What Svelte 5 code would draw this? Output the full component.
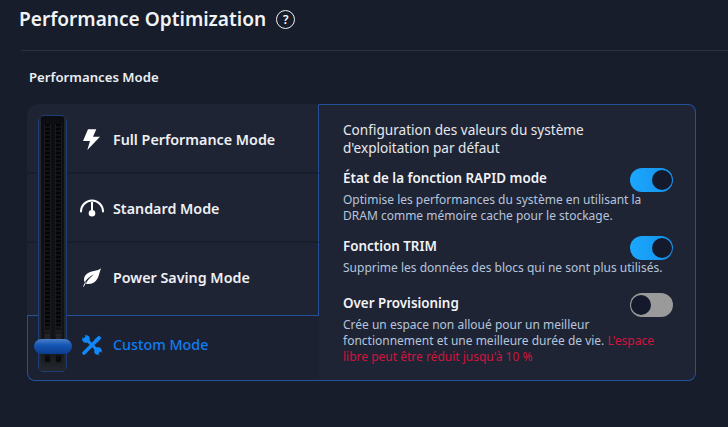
<script>
  const modes = [
    { name: 'Full Performance Mode', icon: 'bolt' },
    { name: 'Standard Mode', icon: 'gauge' },
    { name: 'Power Saving Mode', icon: 'leaf' },
    { name: 'Custom Mode', icon: 'tools', active: true }
  ];
</script>

<div class="page">
  <header class="head">
    <h1>Performance Optimization</h1>
    <span class="help">?</span>
  </header>
  <div class="rule"></div>
  <h2>Performances Mode</h2>

  <section class="panel">
    <div class="modes">
      {#each modes as mode}
        <div class="mode" class:active={mode.active}>
          <span class="icon">
            {#if mode.icon === 'bolt'}
              <svg viewBox="0 0 18 22" width="18" height="22"><path d="M5 .3h8.300L10 7.700h7L4.300 21 7 12H0z" fill="#fff" /></svg>
            {:else if mode.icon === 'gauge'}
              <svg viewBox="0 0 26 19" width="26" height="19">
                <path d="M2 12.500A11 11 0 0 1 24 12.500" fill="none" stroke="#fff" stroke-width="2" stroke-linecap="round" />
                <path d="M13 3v10" stroke="#fff" stroke-width="2" />
                <circle cx="13" cy="14.300" r="3.300" fill="#fff" />
              </svg>
            {:else if mode.icon === 'leaf'}
              <svg viewBox="0 0 18 19" width="18" height="19">
                <path d="M18 .3C15.500 3 10.500 2.500 6.500 4.300 1.500 6.500 0 11 1.700 14.500 3.500 11 6.500 8.500 11 6.500 7.500 9 5 11.500 2.800 15.500 6.500 17 11 15.500 13.500 12 16 9 16.500 4 18 .3Z" fill="#fff" />
                <path d="M2.600 14.500.5 18.500" stroke="#fff" stroke-width="1" />
              </svg>
            {:else}
              <svg viewBox="0 0 20 20" width="20" height="20">
                <path d="M4 4 16 16" stroke="#1187fa" stroke-width="3" />
                <circle cx="4" cy="4" r="3.800" fill="#1187fa" />
                <circle cx="16" cy="16" r="3.800" fill="#1187fa" />
                <path d="M2.500 2.500-1 -1M17.500 17.500 21 21" stroke="#1b2131" stroke-width="3" />
                <path d="M2 18 14 6" stroke="#1187fa" stroke-width="3.600" stroke-linecap="round" />
                <path d="M12.500 4.500 17 .5 19.500 3 15.500 7.500z" fill="#1187fa" />
              </svg>
            {/if}
          </span>
          <span class="mode-name">{mode.name}</span>
        </div>
      {/each}

      <div class="slider">
        <div class="groove"><i></i><i></i></div>
        <div class="knob"></div>
      </div>
    </div>

    <div class="details">
      <p class="intro">Configuration des valeurs du système d'exploitation par défaut</p>

      <div class="option first">
        <h3>État de la fonction RAPID mode</h3>
        <span class="toggle on"></span>
      </div>
      <p class="desc">Optimise les performances du système en utilisant la DRAM comme mémoire cache pour le stockage.</p>

      <div class="option second">
        <h3>Fonction TRIM</h3>
        <span class="toggle on"></span>
      </div>
      <p class="desc">Supprime les données des blocs qui ne sont plus utilisés.</p>

      <div class="option third">
        <h3>Over Provisioning</h3>
        <span class="toggle"></span>
      </div>
      <p class="desc last">Crée un espace non alloué pour un meilleur fonctionnement et une meilleure durée de vie. <span class="warn">L'espace libre peut être réduit jusqu'à 10 %</span></p>
    </div>
  </section>
</div>

<style>
  :global(body) {
    margin: 0;
    background: #171d2b;
  }
  .page {
    width: 728px;
    height: 427px;
    box-sizing: border-box;
    overflow: hidden;
    background: #171d2b;
    color: #fff;
    font-family: "Noto Sans", "Open Sans", sans-serif;
    padding: 5px 0 0 19px;
  }
  .head {
    display: flex;
    align-items: center;
    gap: 10px;
    height: 28px;
  }
  h1 {
    margin: 0;
    font-size: 19.1px;
    font-weight: 600;
    color: #f2f3f5;
  }
  .help {
    width: 17px;
    height: 17px;
    border: 1.5px solid #f2f3f5;
    border-radius: 50%;
    display: flex;
    align-items: center;
    justify-content: center;
    font-size: 12px;
    font-weight: 600;
  }
  .rule {
    height: 1px;
    background: #2b3140;
    margin: 17px 0 0 2px;
  }
  h2 {
    margin: 17px 0 0 10px;
    font-size: 13.2px;
    line-height: 19px;
    font-weight: 600;
    color: #eceef1;
  }
  .panel {
    display: flex;
    width: 669px;
    height: 277px;
    margin: 17px 0 0 8px;
  }
  .modes {
    position: relative;
    width: 292px;
    flex: none;
    display: flex;
    flex-direction: column;
    background: #1f2435;
    border-radius: 12px 0 0 8px;
  }
  .mode {
    height: 69px;
    display: flex;
    align-items: center;
    padding: 2px 0 0 51px;
    gap: 7px;
    box-sizing: border-box;
    border-bottom: 2px solid #191e2c;
    border-right: 1px solid #27509a;
    font-size: 14.3px;
    font-weight: 600;
    color: #eef0f3;
  }
  .mode:nth-child(1) {
    height: 70px;
    border-top: 1px solid transparent;
  }
  .mode:nth-child(3) {
    height: 72px;
    padding: 0 0 3px 51px;
    border-bottom: none;
  }
  .mode.active {
    height: 66px;
    padding: 0 0 7px 50px;
    border: 1px solid #27509a;
    border-right: none;
    border-radius: 0 0 0 8px;
    background: #1b2131;
    color: #0f7cf0;
    font-weight: 500;
  }
  .icon {
    width: 28px;
    display: flex;
    justify-content: center;
  }
  .slider {
    position: absolute;
    left: 11px;
    top: 11px;
    width: 29px;
    height: 257px;
    box-sizing: border-box;
    border: 1px solid #1d3d74;
    border-radius: 6px 6px 5px 5px;
    background: linear-gradient(#0b0d12, #121419 90%, #24272e);
  }
  .groove {
    display: flex;
    justify-content: center;
    gap: 4px;
    height: 100%;
    padding: 8px 0 8px;
    box-sizing: border-box;
    border-left: 2px solid #24262c;
    border-right: 2px solid #24262c;
  }
  .groove i {
    width: 5px;
    background:
      linear-gradient(transparent 84%, #3a3a3c 94%, #0a0a0c 98%),
      repeating-linear-gradient(#050506 0 2px, #101114 2px 4px);
    border-radius: 0 0 3px 3px;
    border: 1px solid #191a1d;
    border-top: none;
  }
  .knob {
    position: absolute;
    left: -5px;
    top: 223px;
    width: 38px;
    height: 15px;
    border-radius: 8px;
    background: linear-gradient(#4a7fc9, #1656b4 40%, #0b3c8e);
  }
  .details {
    flex: 1;
    box-sizing: border-box;
    border: 1px solid #27509a;
    border-left: none;
    border-radius: 0 8px 8px 0;
    background: #1f2435;
    padding: 16px 22px 0 24px;
  }
  .intro {
    margin: 0;
    width: 260px;
    font-size: 13.6px;
    line-height: 18px;
    color: #e6e8ec;
  }
  .option {
    display: flex;
    align-items: center;
    justify-content: space-between;
    height: 24px;
  }
  .option.first {
    margin-top: 11px;
  }
  .option.second {
    margin-top: 12px;
  }
  .option.third {
    margin-top: 17px;
  }
  h3 {
    margin: 0 0 4px;
    font-size: 13.4px;
    font-weight: 600;
    color: #f2f3f5;
  }
  .desc {
    margin: 0;
    font-size: 12px;
    line-height: 16px;
    color: #b5c4dc;
  }
  .desc.last {
    width: 320px;
  }
  .warn {
    color: #d0143c;
  }
  .toggle {
    position: relative;
    width: 43px;
    height: 24px;
    border-radius: 12px;
    background: #9a9a9a;
    flex: none;
  }
  .toggle.on {
    background: linear-gradient(90deg, #1ba8ff, #1590e8);
  }
  .toggle::after {
    content: "";
    position: absolute;
    top: 2px;
    left: 1px;
    width: 20px;
    height: 20px;
    border-radius: 50%;
    background: #141a2c;
  }
  .toggle.on::after {
    left: 22px;
  }
</style>
